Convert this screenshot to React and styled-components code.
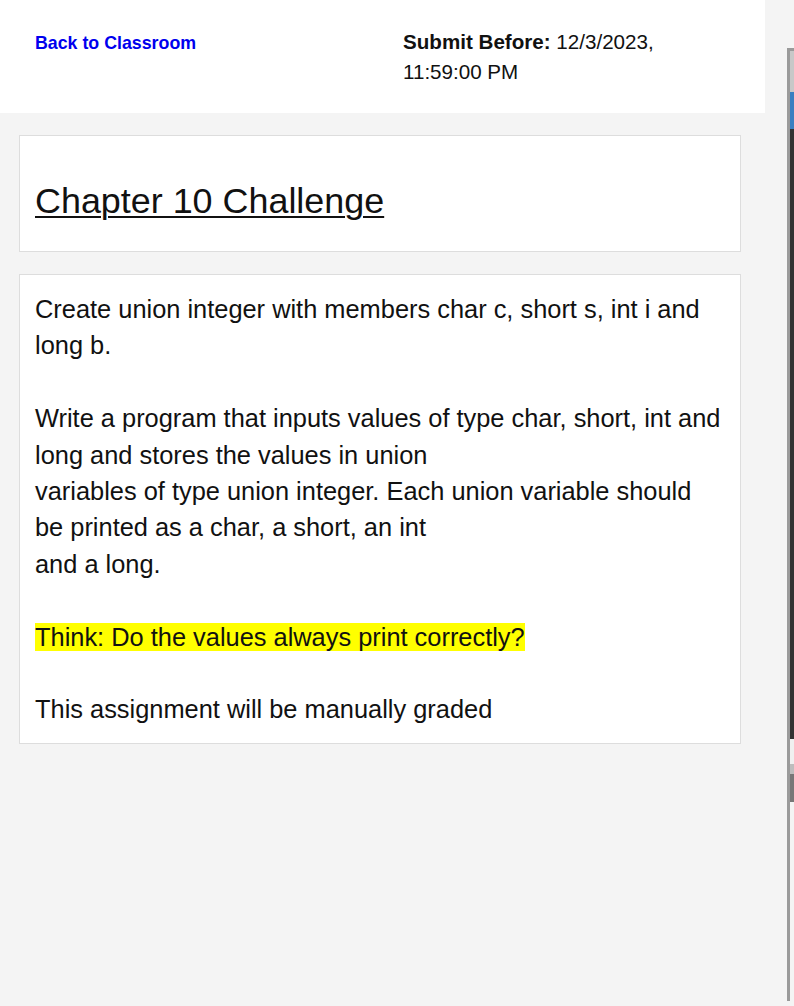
import React from 'react'
import styled, { createGlobalStyle } from 'styled-components'

const GlobalStyle = createGlobalStyle`
  html, body {
    margin: 0;
    padding: 0;
    background: #f4f4f4;
    overflow: hidden;
  }
  body {
    font-family: "Liberation Sans", Arial, sans-serif;
    color: #111;
  }
`

function App() {
  return (
    <Page>
      <GlobalStyle />
      <Main>
        <Header>
          <BackLink href="#">Back to Classroom</BackLink>
          <Deadline>
            <strong>Submit Before:</strong> 12/3/2023, 11:59:00 PM
          </Deadline>
        </Header>
        <Content>
          <Card>
            <Title>Chapter 10 Challenge</Title>
          </Card>
          <Card>
            <Body>
              Create union integer with members char c, short s, int i and long b.
              <br />
              <br />
              Write a program that inputs values of type char, short, int and long and stores the values in union
              <br />
              variables of type union integer. Each union variable should be printed as a char, a short, an int
              <br />
              and a long.
              <br />
              <br />
              <Mark>Think: Do the values always print correctly?</Mark>
              <br />
              <br />
              This assignment will be manually graded
            </Body>
          </Card>
        </Content>
      </Main>
      <SidePanel>
        <Segment color="#c8c8c8" h="41px" />
        <Segment color="#3a7fc1" h="37px" />
        <Segment color="#333333" h="610px" />
        <Segment color="#f0f0f0" h="25px" />
        <Segment color="#bdbdbd" h="10px" />
        <Segment color="#777777" h="28px" />
        <Segment color="#f4f4f4" h="199px" />
      </SidePanel>
    </Page>
  )
}

export default App

const Page = styled.div`
  display: flex;
  align-items: flex-start;
  width: 794px;
  height: 1006px;
  overflow: hidden;
`

const Main = styled.div`
  flex: 0 0 765px;
  width: 765px;
`

const Header = styled.header`
  display: grid;
  grid-template-columns: 368px 1fr;
  align-items: start;
  height: 113px;
  box-sizing: border-box;
  padding: 27px 35px 0;
  background: #fff;
`

const BackLink = styled.a`
  font-size: 17.8px;
  font-weight: bold;
  line-height: 33px;
  color: #0000ee;
  text-decoration: none;
`

const Deadline = styled.div`
  font-size: 20.6px;
  line-height: 30px;
  color: #111;
  strong {
    font-weight: bold;
  }
`

const Content = styled.div`
  display: flex;
  flex-direction: column;
  gap: 22px;
  padding: 22px 24px 0 19px;
`

const Card = styled.section`
  background: #fff;
  border: 1px solid #dddddd;
  padding: 16px 15px;
`

const Title = styled.h2`
  margin: 29px 0 13px;
  font-size: 35.9px;
  font-weight: normal;
  line-height: 41px;
  text-decoration: underline;
  text-decoration-thickness: 2px;
  text-underline-offset: 3px;
  color: #111;
`

const Body = styled.div`
  font-size: 25.4px;
  line-height: 36.4px;
  color: #111;
  margin-bottom: -1px;
`

const Mark = styled.span`
  background: #ffff00;
`

const SidePanel = styled.aside`
  flex: 0 0 300px;
  margin-top: 48px;
  margin-left: 22px;
  border-left: 3px solid #9a9a9a;
  border-top: 3px solid #9a9a9a;
  display: flex;
  flex-direction: column;
`

const Segment = styled.div`
  height: ${p => p.h};
  background: ${p => p.color};
`
